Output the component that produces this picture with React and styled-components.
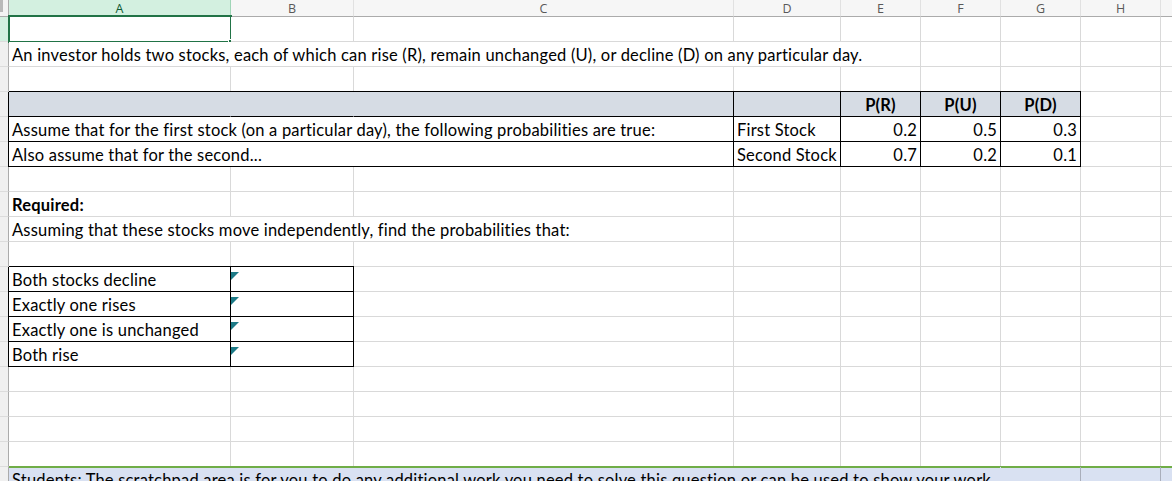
import React from "react";
import styled, { createGlobalStyle, css } from "styled-components";

const GRID = "#d9d9d9";
const INK = "#000";
const GREEN = "#217346";

const GlobalStyle = createGlobalStyle`
  html, body {
    margin: 0;
    padding: 0;
    background: #fff;
    overflow: hidden;
  }
`;

const Sheet = styled.div`
  display: grid;
  grid-template-columns: 9px 222px 123px 380px 107px 80px 80px 80px 80px 40px;
  grid-template-rows: 17px;
  grid-auto-rows: 25px;
  width: 1172px;
  height: 481px;
  overflow: hidden;
  font-family: Lato, "Liberation Sans", sans-serif;
  font-size: 16.5px;
  letter-spacing: 0.2px;
  color: #000;
`;

const Corner = styled.div`
  background: #f3f3f3;
  border-right: 1px solid #ababab;
  border-bottom: 1px solid #ababab;
  box-sizing: border-box;
  position: relative;
  &::before {
    content: "";
    position: absolute;
    left: 0;
    top: 0;
    width: 3px;
    height: 12px;
    background: #b9b9b9;
  }
`;

const ColHead = styled.div`
  box-sizing: border-box;
  display: flex;
  align-items: center;
  justify-content: center;
  background: ${(p) => (p.$active ? "#d3f0e0" : "#f6f6f6")};
  border-right: 1px solid ${(p) => (p.$active ? "#9fd5b7" : "#e1e1e1")};
  border-bottom: 1px solid ${(p) => (p.$active ? GREEN : "#ababab")};
  color: ${(p) => (p.$active ? "#0f5a33" : "#595959")};
  font-family: "Open Sans", "Noto Sans", sans-serif;
  font-size: 12.5px;
  line-height: 15px;
  letter-spacing: 0;
`;

const RowHead = styled.div`
  box-sizing: border-box;
  background: ${(p) => (p.$active ? "#d3f0e0" : "#f0f0f0")};
  border-right: 1px solid ${(p) => (p.$active ? GREEN : "#ababab")};
  border-bottom: 1px solid #dcdcdc;
`;

const lineColor = (on, p, fallback) => (on ? INK : p.$fill && !p.$showGrid ? p.$fill : fallback);

const Cell = styled.div`
  position: relative;
  box-sizing: border-box;
  grid-column: span ${(p) => p.$span || 1};
  display: flex;
  align-items: flex-end;
  justify-content: ${(p) =>
    p.$align === "right" ? "flex-end" : p.$align === "center" ? "center" : "flex-start"};
  padding: 0 3px 2px 3px;
  white-space: nowrap;
  overflow: visible;
  line-height: 18px;
  font-weight: ${(p) => (p.$bold ? 700 : 400)};
  background: ${(p) => p.$fill || "#fff"};
  border-right: 1px solid ${(p) => lineColor(p.$br, p, p.$gridColor || GRID)};
  border-bottom: 1px solid ${(p) => lineColor(p.$bb, p, p.$gridColor || GRID)};
  box-shadow: ${(p) =>
    [
      p.$bt && `0 -1px 0 ${INK}`,
      p.$bl && `-1px 0 0 ${INK}`,
      p.$band && `0 -1px 0 #70ad47, inset 0 1px 0 #70ad47`,
    ]
      .filter(Boolean)
      .join(", ") || "none"};

  ${(p) =>
    p.$selected &&
    css`
      &::before {
        content: "";
        position: absolute;
        left: -1px;
        top: -2px;
        right: -2px;
        bottom: -2px;
        border: 2px solid ${GREEN};
        pointer-events: none;
      }
      &::after {
        content: "";
        position: absolute;
        right: -5px;
        bottom: -5px;
        width: 5px;
        height: 5px;
        background: ${GREEN};
        border: 1px solid #fff;
      }
    `}

  ${(p) =>
    p.$marker &&
    css`
      &::after {
        content: "";
        position: absolute;
        left: 0;
        top: 5px;
        width: 0;
        height: 0;
        border-top: 8px solid #1c7a87;
        border-right: 8px solid transparent;
      }
    `}
`;

// last column is only a sliver in view, so its letter is not shown
const COLS = ["A", "B", "C", "D", "E", "F", "G", "H", ""];
const BAND = "#d6dce4";
const NOTE = "#d9e1f2";

const blank = (n, extra = {}) => Array.from({ length: n }, () => ({ ...extra }));

const probHead = [
  { fill: BAND, bl: true, bb: true, bt: true },
  { fill: BAND, bb: true, bt: true },
  { fill: BAND, bb: true, br: true, bt: true },
  { fill: BAND, bb: true, br: true, bt: true },
  { text: "P(R)", bold: true, align: "center", fill: BAND, bb: true, br: true, bt: true },
  { text: "P(U)", bold: true, align: "center", fill: BAND, bb: true, br: true, bt: true },
  { text: "P(D)", bold: true, align: "center", fill: BAND, bb: true, br: true, bt: true },
  {},
  {},
];

const probRow = (label, name, values) => [
  { text: label, span: 3, bl: true, bb: true, br: true },
  { text: name, bb: true, br: true },
  ...values.map((v) => ({ text: v, align: "right", bb: true, br: true })),
  {},
  {},
];

const answerRow = (label, first) => [
  { text: label, bl: true, bb: true, br: true, bt: first },
  { marker: true, bb: true, br: true, bt: first },
  ...blank(7),
];

const rows = [
  [{ selected: true }, ...blank(8)],
  [
    {
      text: "An investor holds two stocks, each of which can rise (R), remain unchanged (U), or decline (D) on any particular day.",
      span: 5,
    },
    ...blank(4),
  ],
  blank(9),
  probHead,
  probRow(
    "Assume that for the first stock (on a particular day), the following probabilities are true:",
    "First Stock",
    ["0.2", "0.5", "0.3"]
  ),
  probRow("Also assume that for the second...", "Second Stock", ["0.7", "0.2", "0.1"]),
  blank(9),
  [{ text: "Required:", bold: true }, ...blank(8)],
  [
    { text: "Assuming that these stocks move independently, find the probabilities that:", span: 3 },
    ...blank(6),
  ],
  blank(9),
  answerRow("Both stocks decline", true),
  answerRow("Exactly one rises"),
  answerRow("Exactly one is unchanged"),
  answerRow("Both rise"),
  blank(9),
  blank(9),
  blank(9),
  blank(9),
  [
    {
      text: "Students: The scratchpad area is for you to do any additional work you need to solve this question or can be used to show your work.",
      span: 6,
      fill: NOTE,
      band: true,
    },
    ...blank(3, { fill: NOTE, band: true, showGrid: true, gridColor: "#a9aebb" }),
  ],
];

const App = () => (
  <>
    <GlobalStyle />
    <Sheet>
      <Corner />
      {COLS.map((c, i) => (
        <ColHead key={i} $active={c === "A"}>
          {c}
        </ColHead>
      ))}
      {rows.map((row, r) => (
        <React.Fragment key={r}>
          <RowHead $active={r === 0} />
          {row.map((c, i) => (
            <Cell
              key={i}
              $span={c.span}
              $align={c.align}
              $bold={c.bold}
              $fill={c.fill}
              $br={c.br}
              $bb={c.bb}
              $bt={c.bt}
              $bl={c.bl}
              $band={c.band}
              $showGrid={c.showGrid}
              $gridColor={c.gridColor}
              $selected={c.selected}
              $marker={c.marker}
            >
              {c.text}
            </Cell>
          ))}
        </React.Fragment>
      ))}
    </Sheet>
  </>
);

export default App;
